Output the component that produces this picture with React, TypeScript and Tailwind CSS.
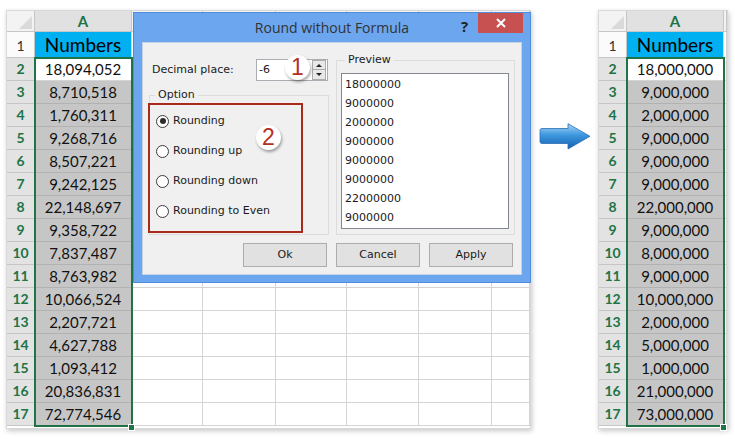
import React from 'react';

const leftValues = [
  '18,094,052', '8,710,518', '1,760,311', '9,268,716', '8,507,221', '9,242,125', '22,148,697', '9,358,722',
  '7,837,487', '8,763,982', '10,066,524', '2,207,721', '4,627,788', '1,093,412', '20,836,831', '72,774,546',
];
const rightValues = [
  '18,000,000', '9,000,000', '2,000,000', '9,000,000', '9,000,000', '9,000,000', '22,000,000', '9,000,000',
  '8,000,000', '9,000,000', '10,000,000', '2,000,000', '5,000,000', '1,000,000', '21,000,000', '73,000,000',
];
const previewValues = ['18000000', '9000000', '2000000', '9000000', '9000000', '9000000', '22000000', '9000000'];
const options = ['Rounding', 'Rounding up', 'Rounding down', 'Rounding to Even'];

// widths of the columns after A
const leftCols = ['w-[71px]', 'w-[73px]', 'w-[71px]', 'w-[72px]', 'w-[73px]', 'w-[38px]'];
const rightCols = ['w-[3px]'];

interface SheetProps {
  values: string[];
  cols: string[];
}

const Sheet: React.FC<SheetProps> = ({ values, cols }) => (
  <div className="relative bg-white border border-[#d9d9d9] pb-[2px] shadow-[1px_2px_5px_rgba(0,0,0,0.22)] font-['Lato',sans-serif]">
    {/* column headers */}
    <div className="flex h-[21px]">
      <div className="relative w-[28px] shrink-0 bg-[#f3f3f3] border-r border-b border-[#c6c6c6]">
        <span className="absolute right-[2px] bottom-[2px] w-0 h-0 border-l-[13px] border-b-[13px] border-l-transparent border-b-[#dadada]" />
      </div>
      <div className="w-[97px] shrink-0 flex items-center justify-center bg-[#e1e1e1] border-r border-b border-[#c6c6c6] text-[15px] font-bold text-[#217346]">
        A
      </div>
      {cols.map((w, i) => (
        <div key={i} className={`${w} shrink-0 bg-[#f3f3f3] border-r border-b border-[#c6c6c6]`} />
      ))}
    </div>

    {/* row 1 */}
    <div className="flex h-[26px]">
      <div className="w-[28px] shrink-0 flex items-end justify-center pb-[1px] bg-[#fbfbfb] border-r border-b border-[#c6c6c6] text-[14px] text-[#333]">
        1
      </div>
      <div className="w-[97px] shrink-0 flex items-end justify-center bg-[#00b0f0] border-r border-b border-[#d4d4d4] text-[19px] leading-[24px] text-black">
        Numbers
      </div>
      {cols.map((w, i) => (
        <div key={i} className={`${w} shrink-0 border-r border-b border-[#d4d4d4]`} />
      ))}
    </div>

    {/* data rows */}
    {values.map((v, r) => (
      <div key={r} className="flex h-[23px]">
        <div className="w-[28px] shrink-0 flex items-end justify-center pb-[1px] bg-[#e3e3e3] border-r border-b border-[#c6c6c6] text-[14px] font-bold text-[#217346]">
          {r + 2}
        </div>
        <div
          className={`w-[97px] shrink-0 flex items-end justify-center pb-[1px] border-r border-b text-[15px] leading-[20px] text-[#111] ${
            r === 0 ? 'bg-white border-[#d4d4d4]' : 'bg-[#c6c6c6] border-[#b2b2b2]'
          }`}
        >
          {v}
        </div>
        {cols.map((w, i) => (
          <div key={i} className={`${w} shrink-0 border-r border-b border-[#d4d4d4]`} />
        ))}
      </div>
    ))}

    {/* selection and fill handle */}
    <div className="absolute left-[27px] top-[46px] w-[99px] h-[370px] border-2 border-[#217346]" />
    <div className="absolute left-[121px] top-[413px] w-[7px] h-[7px] bg-[#217346] border border-white" />
  </div>
);

const Badge: React.FC<{ n: string; className: string }> = ({ n, className }) => (
  <div
    className={`absolute w-[25px] h-[25px] rounded-full bg-white shadow-[1px_2px_3px_rgba(0,0,0,0.35)] flex items-center justify-center font-['Liberation_Sans',sans-serif] text-[23px] leading-none text-[#b3301f] ${className}`}
  >
    {n}
  </div>
);

const Radio: React.FC<{ checked?: boolean }> = ({ checked }) => (
  <span className="w-[13px] h-[13px] shrink-0 rounded-full border border-[#3c3c3c] bg-white flex items-center justify-center">
    {checked && <span className="w-[6px] h-[6px] rounded-full bg-[#2b2b2b]" />}
  </span>
);

const Dialog = () => (
  <div className="absolute left-[133px] top-[12px] w-[398px] h-[271px] flex flex-col bg-[#6ba6ee] border border-[#4f8ddb] font-['DejaVu_Sans',sans-serif] text-[11px] text-[#1a1a1a]">
    <div className="relative h-[29px] shrink-0 flex items-center justify-center font-['Open_Sans',sans-serif] text-[14px] text-[#333]">
      Round without Formula
      <span className="absolute left-[327px] top-[2px] text-[15px] font-bold text-[#222]">?</span>
      <div className="absolute right-[7px] top-0 w-[45px] h-[20px] bg-[#c75050] flex items-center justify-center">
        <svg width="10" height="10" viewBox="0 0 10 10">
          <path d="M1 1 L9 9 M9 1 L1 9" stroke="#fff" strokeWidth="2" />
        </svg>
      </div>
    </div>

    <div className="ml-[8px] mr-[8px] mb-[7px] flex-1 bg-[#f0f0f0] border border-[#c5d3e3] pt-[10px] px-[6px]">
      <div className="flex gap-[7px]">
        <div className="relative w-[180px]">
          <div className="mt-[6px] h-[22px] flex items-center">
            <span className="ml-[3px] w-[104px]">Decimal place:</span>
            <div className="w-[72px] h-[22px] border border-[#abadb3] bg-white flex items-center">
              <span className="pl-[2px] flex-1">-6</span>
              <div className="mr-[1px] w-[14px] flex flex-col">
                <div className="h-[10px] border border-[#acacac] bg-[#e8e8e8] flex items-center justify-center">
                  <span className="w-0 h-0 border-l-[3px] border-r-[3px] border-b-[3px] border-l-transparent border-r-transparent border-b-[#222]" />
                </div>
                <div className="h-[10px] border border-t-0 border-[#acacac] bg-[#e8e8e8] flex items-center justify-center">
                  <span className="w-0 h-0 border-l-[3px] border-r-[3px] border-t-[3px] border-l-transparent border-r-transparent border-t-[#222]" />
                </div>
              </div>
            </div>
          </div>

          <fieldset className="mt-[7px] h-[147px] border border-[#dcdcdc]">
            <legend className="ml-[5px] px-[3px] leading-[14px]">Option</legend>
            <div className="flex flex-col gap-[14px] pt-[11px] pl-[6px]">
              {options.map((o, i) => (
                <label key={o} className="h-[16px] flex items-center gap-[4px]">
                  <Radio checked={i === 0} />
                  {o}
                </label>
              ))}
            </div>
          </fieldset>

          {/* annotations */}
          <div className="absolute left-[-1px] top-[50px] w-[155px] h-[130px] border-2 border-[#a82a1b]" />
          <Badge n="1" className="left-[136px] top-[2px]" />
          <Badge n="2" className="left-[107px] top-[72px]" />
        </div>

        <fieldset className="w-[179px] h-[182px] border border-[#dcdcdc] pl-[4px] pr-[5px]">
          <legend className="ml-[4px] px-[3px] leading-[14px]">Preview</legend>
          <div className="mt-[6px] h-[156px] border border-[#828790] bg-white pl-[3px] pt-[1px] leading-[19px]">
            {previewValues.map((p, i) => (
              <div key={i}>{p}</div>
            ))}
          </div>
        </fieldset>
      </div>

      <div className="mt-[8px] flex justify-end gap-[9px] pr-[2px]">
        {['Ok', 'Cancel', 'Apply'].map((b) => (
          <button key={b} className="w-[84px] h-[24px] border border-[#adadad] bg-[#e1e1e1] text-[#1a1a1a]">
            {b}
          </button>
        ))}
      </div>
    </div>
  </div>
);

const Arrow = () => (
  <svg width="52" height="27" viewBox="0 0 52 27" className="ml-[8px] mt-[123px] shrink-0">
    <defs>
      <linearGradient id="arrowFill" x1="0" y1="0" x2="0" y2="1">
        <stop offset="0" stopColor="#a6d6f8" />
        <stop offset="0.45" stopColor="#3d97de" />
        <stop offset="1" stopColor="#1560b0" />
      </linearGradient>
    </defs>
    <path
      d="M3 5.5 H29 V0.7 L51 13.3 L29 26 V20.5 H3 Q1 20.5 1 18.5 V7.5 Q1 5.5 3 5.5 Z"
      fill="url(#arrowFill)"
      stroke="#2a6db5"
      strokeWidth="0.8"
    />
  </svg>
);

export default function App() {
  return (
    <div className="relative w-[735px] h-[439px] overflow-hidden bg-white flex items-start">
      <div className="ml-[6px] mt-[10px] w-[525px] shrink-0">
        <Sheet values={leftValues} cols={leftCols} />
      </div>
      <Arrow />
      <div className="ml-[7px] mt-[10px] w-[130px] shrink-0">
        <Sheet values={rightValues} cols={rightCols} />
      </div>
      <Dialog />
    </div>
  );
}
